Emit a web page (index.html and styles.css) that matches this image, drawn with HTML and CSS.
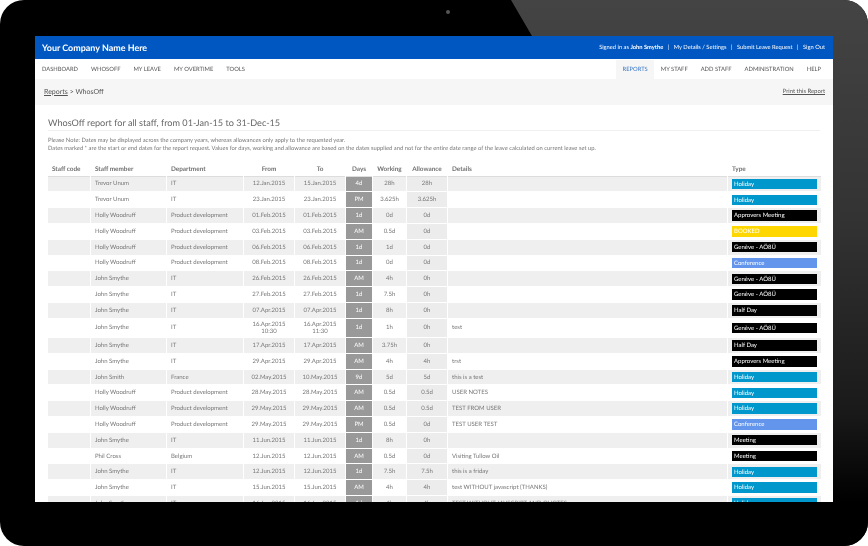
FILE: index.html
```html
<!DOCTYPE html>
<html lang="en">
<head>
<meta charset="utf-8">
<title>WhosOff report</title>
<link rel="stylesheet" href="styles.css">
</head>
<body>
<div class="tablet">
  <div class="glare"></div>
  <div class="camera"></div>
  <main class="screen">
    <header class="topbar">
      <div class="brand">Your Company Name Here</div>
      <div class="account">
        <span>Signed in as <b>John Smythe</b></span><i>|</i><span>My Details / Settings</span><i>|</i><span>Submit Leave Request</span><i>|</i><span>Sign Out</span>
      </div>
    </header>
    <nav class="nav">
      <div class="nav-group">
        <a>DASHBOARD</a><a>WHOSOFF</a><a>MY LEAVE</a><a>MY OVERTIME</a><a>TOOLS</a>
      </div>
      <div class="nav-group">
        <a class="active">REPORTS</a><a>MY STAFF</a><a>ADD STAFF</a><a>ADMINISTRATION</a><a>HELP</a>
      </div>
    </nav>
    <div class="crumbs">
      <div><u>Reports</u> &gt; WhosOff</div>
      <u class="print">Print this Report</u>
    </div>
    <section class="content">
      <h1>WhosOff report for all staff, from 01-Jan-15 to 31-Dec-15</h1>
      <p class="note">Please Note: Dates may be displayed across the company years, whereas allowances only apply to the requested year.<br>Dates marked * are the start or end dates for the report request. Values for days, working and allowance are based on the dates supplied and not for the entire date range of the leave calculated on current leave set up.</p>
      <table class="report">
        <colgroup><col class="c-code"><col class="c-member"><col class="c-dept"><col class="c-date"><col class="c-date"><col class="c-days"><col class="c-work"><col class="c-allow"><col class="c-details"><col class="c-type"></colgroup>
        <thead>
          <tr><th class="l">Staff code</th><th class="l">Staff member</th><th class="l">Department</th><th>From</th><th>To</th><th>Days</th><th>Working</th><th>Allowance</th><th class="l">Details</th><th class="l">Type</th></tr>
        </thead>
        <tbody>
          <tr><td></td><td>Trevor Unum</td><td>IT</td><td class="c">12.Jan.2015</td><td class="c">15.Jan.2015</td><td class="days">4d</td><td class="c">28h</td><td class="c allow">28h</td><td></td><td class="t"><span class="tag holiday">Holiday</span></td></tr>
          <tr><td></td><td>Trevor Unum</td><td>IT</td><td class="c">23.Jan.2015</td><td class="c">23.Jan.2015</td><td class="days">PM</td><td class="c">3.625h</td><td class="c allow">3.625h</td><td></td><td class="t"><span class="tag holiday">Holiday</span></td></tr>
          <tr><td></td><td>Holly Woodruff</td><td>Product development</td><td class="c">01.Feb.2015</td><td class="c">01.Feb.2015</td><td class="days">1d</td><td class="c">0d</td><td class="c allow">0d</td><td></td><td class="t"><span class="tag black">Approvers Meeting</span></td></tr>
          <tr><td></td><td>Holly Woodruff</td><td>Product development</td><td class="c">03.Feb.2015</td><td class="c">03.Feb.2015</td><td class="days">AM</td><td class="c">0.5d</td><td class="c allow">0d</td><td></td><td class="t"><span class="tag booked">BOOKED</span></td></tr>
          <tr><td></td><td>Holly Woodruff</td><td>Product development</td><td class="c">06.Feb.2015</td><td class="c">06.Feb.2015</td><td class="days">1d</td><td class="c">1d</td><td class="c allow">0d</td><td></td><td class="t"><span class="tag black">Genève - AÖ8Ü</span></td></tr>
          <tr><td></td><td>Holly Woodruff</td><td>Product development</td><td class="c">08.Feb.2015</td><td class="c">08.Feb.2015</td><td class="days">1d</td><td class="c">0d</td><td class="c allow">0d</td><td></td><td class="t"><span class="tag conf">Conference</span></td></tr>
          <tr><td></td><td>John Smythe</td><td>IT</td><td class="c">26.Feb.2015</td><td class="c">26.Feb.2015</td><td class="days">AM</td><td class="c">4h</td><td class="c allow">0h</td><td></td><td class="t"><span class="tag black">Genève - AÖ8Ü</span></td></tr>
          <tr><td></td><td>John Smythe</td><td>IT</td><td class="c">27.Feb.2015</td><td class="c">27.Feb.2015</td><td class="days">1d</td><td class="c">7.5h</td><td class="c allow">0h</td><td></td><td class="t"><span class="tag black">Genève - AÖ8Ü</span></td></tr>
          <tr><td></td><td>John Smythe</td><td>IT</td><td class="c">07.Apr.2015</td><td class="c">07.Apr.2015</td><td class="days">1d</td><td class="c">8h</td><td class="c allow">0h</td><td></td><td class="t"><span class="tag black">Half Day</span></td></tr>
          <tr class="tall"><td></td><td>John Smythe</td><td>IT</td><td class="c">16.Apr.2015<br>10:30</td><td class="c">16.Apr.2015<br>11:30</td><td class="days">1d</td><td class="c">1h</td><td class="c allow">0h</td><td>test</td><td class="t"><span class="tag black">Genève - AÖ8Ü</span></td></tr>
          <tr><td></td><td>John Smythe</td><td>IT</td><td class="c">17.Apr.2015</td><td class="c">17.Apr.2015</td><td class="days">AM</td><td class="c">3.75h</td><td class="c allow">0h</td><td></td><td class="t"><span class="tag black">Half Day</span></td></tr>
          <tr><td></td><td>John Smythe</td><td>IT</td><td class="c">29.Apr.2015</td><td class="c">29.Apr.2015</td><td class="days">AM</td><td class="c">4h</td><td class="c allow">4h</td><td>trst</td><td class="t"><span class="tag black">Approvers Meeting</span></td></tr>
          <tr><td></td><td>John Smith</td><td>France</td><td class="c">02.May.2015</td><td class="c">10.May.2015</td><td class="days">9d</td><td class="c">5d</td><td class="c allow">5d</td><td>this is a test</td><td class="t"><span class="tag holiday">Holiday</span></td></tr>
          <tr><td></td><td>Holly Woodruff</td><td>Product development</td><td class="c">28.May.2015</td><td class="c">28.May.2015</td><td class="days">AM</td><td class="c">0.5d</td><td class="c allow">0.5d</td><td>USER NOTES</td><td class="t"><span class="tag holiday">Holiday</span></td></tr>
          <tr><td></td><td>Holly Woodruff</td><td>Product development</td><td class="c">29.May.2015</td><td class="c">29.May.2015</td><td class="days">AM</td><td class="c">0.5d</td><td class="c allow">0.5d</td><td>TEST FROM USER</td><td class="t"><span class="tag holiday">Holiday</span></td></tr>
          <tr><td></td><td>Holly Woodruff</td><td>Product development</td><td class="c">29.May.2015</td><td class="c">29.May.2015</td><td class="days">PM</td><td class="c">0.5d</td><td class="c allow">0d</td><td>TEST USER TEST</td><td class="t"><span class="tag conf">Conference</span></td></tr>
          <tr><td></td><td>John Smythe</td><td>IT</td><td class="c">11.Jun.2015</td><td class="c">11.Jun.2015</td><td class="days">1d</td><td class="c">8h</td><td class="c allow">0h</td><td></td><td class="t"><span class="tag black">Meeting</span></td></tr>
          <tr><td></td><td>Phil Cross</td><td>Belgium</td><td class="c">12.Jun.2015</td><td class="c">12.Jun.2015</td><td class="days">AM</td><td class="c">0.5d</td><td class="c allow">0d</td><td>Visiting Tullow Oil</td><td class="t"><span class="tag black">Meeting</span></td></tr>
          <tr><td></td><td>John Smythe</td><td>IT</td><td class="c">12.Jun.2015</td><td class="c">12.Jun.2015</td><td class="days">1d</td><td class="c">7.5h</td><td class="c allow">7.5h</td><td>this is a friday</td><td class="t"><span class="tag holiday">Holiday</span></td></tr>
          <tr><td></td><td>John Smythe</td><td>IT</td><td class="c">15.Jun.2015</td><td class="c">15.Jun.2015</td><td class="days">AM</td><td class="c">4h</td><td class="c allow">4h</td><td>test WITHOUT javascript (THANKS)</td><td class="t"><span class="tag holiday">Holiday</span></td></tr>
          <tr><td></td><td>John Smythe</td><td>IT</td><td class="c">16.Jun.2015</td><td class="c">16.Jun.2015</td><td class="days">1d</td><td class="c">4h</td><td class="c allow">4h</td><td>TEST WITHOUT JAVSCRIPT AND QUOTES</td><td class="t"><span class="tag holiday">Holiday</span></td></tr>
        </tbody>
      </table>
    </section>
  </main>
</div>
</body>
</html>
```
FILE: styles.css
```css
html, body { margin: 0; padding: 0; background: #fff; }
body { width: 868px; height: 546px; overflow: hidden; font-family: Lato, "Open Sans", sans-serif; text-rendering: geometricPrecision; }
.tablet { width: 868px; height: 546px; box-sizing: border-box; padding: 36px 35px 44px 35px; background: #000; border-radius: 24px; position: relative; overflow: hidden; }
.glare { position: absolute; left: 511px; top: 0; right: 0; bottom: 0; clip-path: polygon(0 0, 100% 0, 100% 100%, 322px 100%, 322px 36px, 21px 36px); background: linear-gradient(180deg, #444 0, #333 40%, #1a1a1a 75%, #000 92%); }
.camera { position: absolute; left: 446px; top: 10px; width: 4px; height: 4px; border-radius: 50%; background: #555; }
.screen { position: relative; height: 466px; overflow: hidden; background: #fff; color: #6a6a6a; filter: blur(0.25px); }
.topbar { height: 23px; background: #0057c2; color: #fff; display: flex; justify-content: space-between; align-items: center; padding: 0 8px 0 7px; }
.brand { font-size: 8.95px; font-weight: 700; }
.account { font-size: 5.75px; display: flex; }
.account b { font-weight: 700; }
.account i { font-style: normal; margin: 0 4.5px; }
.nav { height: 20px; display: flex; justify-content: space-between; font-size: 5.8px; color: #555; }
.nav-group { display: flex; padding: 0 5.5px; }
.nav-group a { padding: 0 6.5px; display: flex; align-items: center; }
.nav-group:first-child a:first-child { padding-left: 1.5px; }
.nav-group a.active { color: #3a78c8; background: #f6f6f6; margin-top: 1px; padding-bottom: 1px; }
.crumbs { height: 25px; background: #f6f6f6; display: flex; justify-content: space-between; align-items: center; padding: 0 8px 1px 9px; font-size: 7px; color: #555; }
.print { font-size: 5.9px; }
.content { padding: 0 13px; }
h1 { margin: 0; padding: 12px 0 3px; height: 26px; box-sizing: border-box; font-size: 9.15px; line-height: 12px; font-weight: 400; color: #666; border-bottom: 1px solid #f0f0f0; }
.note { margin: 6px 0 0; font-size: 5.8px; line-height: 8px; color: #777; }
.report { width: 775px; margin: 12.6px 0 0 -1px; table-layout: fixed; border-collapse: separate; border-spacing: 1px 0; font-size: 6px; color: #777; }
.c-code { width: 42px; } .c-member { width: 75px; } .c-dept { width: 76px; } .c-date { width: 50px; } .c-days { width: 26px; } .c-work { width: 33px; } .c-allow { width: 40px; } .c-details { width: 279px; } .c-type { width: 93px; }
th { height: 9px; padding: 0 0 1px; font-weight: 700; color: #6f6f6f; text-align: center; border-bottom: 1px solid #ddd; font-size: 6.4px; line-height: 8px; }
th.l { text-align: left; padding-left: 4px; }
td { height: 14.8px; padding: 0 0 0 4px; border-bottom: 1px solid #fff; line-height: 7px; box-sizing: content-box; overflow: hidden; white-space: nowrap; }
tr.tall td { height: 18.3px; }
tbody tr:nth-child(odd) td { background: #efefef; }
td.c { text-align: center; padding-left: 0; }
tbody tr td.allow { background: #ececec; }
tbody tr td.days { background: #999; color: #fff; text-align: center; padding: 0; }
tbody tr td.t { padding: 0 4px; }
.tag { display: block; height: 10.5px; line-height: 11px; padding-left: 2px; font-size: 6px; color: #fff; }
.holiday { background: #0098cc; }
.black { background: #000; }
.booked { background: #ffd700; color: #fff; }
.conf { background: #6495ed; }
```
